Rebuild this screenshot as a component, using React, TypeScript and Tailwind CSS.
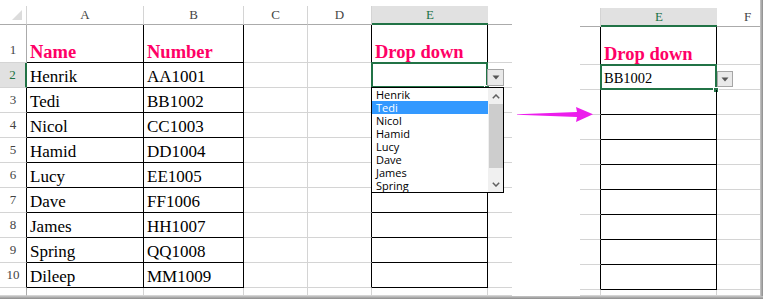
import React from 'react';

const ROWS: [string, string][] = [
  ['Name', 'Number'],
  ['Henrik', 'AA1001'],
  ['Tedi', 'BB1002'],
  ['Nicol', 'CC1003'],
  ['Hamid', 'DD1004'],
  ['Lucy', 'EE1005'],
  ['Dave', 'FF1006'],
  ['James', 'HH1007'],
  ['Spring', 'QQ1008'],
  ['Dileep', 'MM1009'],
];

const LIST = ['Henrik', 'Tedi', 'Nicol', 'Hamid', 'Lucy', 'Dave', 'James', 'Spring'];

const serif = "font-['Liberation_Serif','Times_New_Roman',serif]";
const headCell = `flex items-center justify-center border-b border-r border-b-[#ababab] border-r-[#d4d4d4] text-[13px] text-[#444] ${serif}`;
const activeHead = `flex items-center justify-center border-b-2 border-b-[#217346] bg-[#e1e1e1] text-[13px] text-[#217346] ${serif}`;
const grayCell = 'border-b border-r border-[#d4d4d4]';

const DropButton: React.FC<{ className: string }> = ({ className }) => (
  <div className={`absolute flex items-center justify-center border border-[#a6a6a6] bg-[#e9e9e9] ${className}`}>
    <svg width="8" height="5" viewBox="0 0 8 5">
      <polygon points="0.5,0.5 7.5,0.5 4,4.5" fill="#555" />
    </svg>
  </div>
);

const Selection: React.FC = () => (
  <>
    <div className="absolute -left-px -top-px w-[117px] h-[26px] border-2 border-[#217346]" />
    <div className="absolute left-[112px] top-[22px] w-[6px] h-[6px] bg-[#217346] border border-white" />
  </>
);

const DropList: React.FC = () => (
  <div className="absolute left-[371px] top-[87px] w-[133px] h-[106px] border border-black bg-white flex overflow-hidden font-['Open_Sans',sans-serif] text-[11px]">
    <div className="w-[116px] flex flex-col">
      {LIST.map((n, i) => (
        <div
          key={n}
          className={`h-[13px] shrink-0 leading-[13px] pl-[4px] ${i === 1 ? 'bg-[#3399ff] text-white' : 'text-black'}`}
        >
          {n}
        </div>
      ))}
    </div>
    <div className="flex-1 bg-[#f0f0f0] flex flex-col items-center">
      <div className="h-[16px] flex items-center justify-center">
        <svg width="8" height="5" viewBox="0 0 8 5">
          <polyline points="0.8,4.2 4,1 7.2,4.2" fill="none" stroke="#606060" strokeWidth="1.5" />
        </svg>
      </div>
      <div className="w-[14px] h-[64px] bg-[#cdcdcd]" />
      <div className="flex-1" />
      <div className="h-[16px] flex items-center justify-center">
        <svg width="8" height="5" viewBox="0 0 8 5">
          <polyline points="0.8,0.8 4,4 7.2,0.8" fill="none" stroke="#606060" strokeWidth="1.5" />
        </svg>
      </div>
    </div>
  </div>
);

const LeftSheet: React.FC = () => {
  const rows = Array.from({ length: 11 }, (_, i) => i + 1);
  return (
    <div className="relative w-[512px] pt-[6px] shrink-0">
      <div className="grid grid-cols-[27px_117px_100px_64px_64px_116px_24px] grid-rows-[19px_38px_repeat(9,25px)_8px]">
        <div className="relative border-b border-r border-b-[#ababab] border-r-[#d4d4d4]">
          <svg className="absolute left-0 top-0" width="27" height="19">
            <polygon points="22,4 22,14 12,14" fill="#dcdcdc" />
          </svg>
        </div>
        <div className={headCell}>A</div>
        <div className={headCell}>B</div>
        <div className={headCell}>C</div>
        <div className={headCell}>D</div>
        <div className={activeHead}>E</div>
        <div className="border-b border-b-[#ababab]" />

        {rows.map((r) => {
          const inTable = r <= 10;
          const data = inTable ? ROWS[r - 1] : null;
          const bold = r === 1;
          const textCls = bold
            ? `font-bold text-[18.5px] text-[#ff0066] ${serif}`
            : `text-[17px] text-black ${serif}`;
          const rowHead =
            r === 2
              ? 'bg-[#e1e1e1] text-[#217346] border-r-2 border-r-[#217346]'
              : r >= 3 && r <= 10
              ? 'text-[#444] border-r border-r-black'
              : 'text-[#444] border-r border-r-[#ababab]';
          const tableCell = inTable ? 'border-b border-r border-black' : grayCell;
          return (
            <React.Fragment key={r}>
              <div
                className={`flex justify-center border-b border-b-[#d4d4d4] text-[13px] overflow-hidden ${serif} ${rowHead} ${
                  r === 11 ? 'items-start pt-[5px]' : 'items-center'
                } ${r === 1 ? 'pt-[12px]' : ''}`}
              >
                {r}
              </div>
              <div className={`flex items-end pl-[3px] pb-[1px] leading-[18px] ${tableCell} ${textCls}`}>{data?.[0]}</div>
              <div className={`flex items-end pl-[3px] pb-[1px] leading-[18px] ${tableCell} ${textCls}`}>{data?.[1]}</div>
              <div className={grayCell} />
              <div className={inTable ? 'border-b border-b-[#d4d4d4] border-r border-r-black' : grayCell} />
              <div
                className={`relative flex items-end pl-[3px] pb-[1px] leading-[18px] ${tableCell} ${textCls}`}
              >
                {r === 1 ? 'Drop down' : ''}
                {r === 2 && <Selection />}
              </div>
              <div className="border-b border-b-[#d4d4d4]" />
            </React.Fragment>
          );
        })}
      </div>
      <DropButton className="left-[487px] top-[69px] w-[17px] h-[17px]" />
      <DropList />
    </div>
  );
};

const RightSheet: React.FC = () => {
  const rows = Array.from({ length: 11 }, (_, i) => i + 1);
  return (
    <div className="relative w-[180px] pt-[8px] overflow-hidden shrink-0">
      <div className="grid w-max grid-cols-[21px_116px_62px] grid-rows-[19px_38px_repeat(9,25px)_6px]">
        <div className="border-b border-r border-b-[#ababab] border-r-[#d4d4d4]" />
        <div className={activeHead}>E</div>
        <div className={headCell}>F</div>
        {rows.map((r) => {
          const inTable = r <= 10;
          return (
            <React.Fragment key={r}>
              <div className={inTable ? 'border-b border-b-[#d4d4d4] border-r border-r-black' : grayCell} />
              <div
                className={`relative flex items-end pl-[3px] pb-[1px] leading-[18px] ${serif} ${
                  inTable ? 'border-b border-r border-black' : grayCell
                } ${r === 1 ? 'font-bold text-[18.5px] text-[#ff0066]' : 'text-[14.5px] text-black pb-[2px]'}`}
              >
                {r === 1 ? 'Drop down' : r === 2 ? 'BB1002' : ''}
                {r === 2 && <Selection />}
              </div>
              <div className="border-b border-b-[#d4d4d4]" />
            </React.Fragment>
          );
        })}
      </div>
      <DropButton className="left-[137px] top-[71px] w-[16px] h-[16px]" />
    </div>
  );
};

export default function App() {
  return (
    <div className="relative w-[763px] h-[299px] bg-white overflow-hidden flex flex-col">
      <div className="flex h-[296px]">
        <LeftSheet />
        <div className="w-[68px] shrink-0" />
        <RightSheet />
        <div className="w-[3px] shrink-0 bg-linear-to-r from-[#c8c8c8] to-[#8c8c8c]" />
      </div>
      <div className="h-[3px] bg-linear-to-b from-[#c8c8c8] to-[#8c8c8c]" />
      <svg className="absolute left-[515px] top-[105px]" width="80" height="19" viewBox="0 0 80 19">
        <polygon points="2,9.2 62,7 61,2 78,9.3 61,17 62,12 2,9.8" fill="#ec1dec" />
      </svg>
    </div>
  );
}
